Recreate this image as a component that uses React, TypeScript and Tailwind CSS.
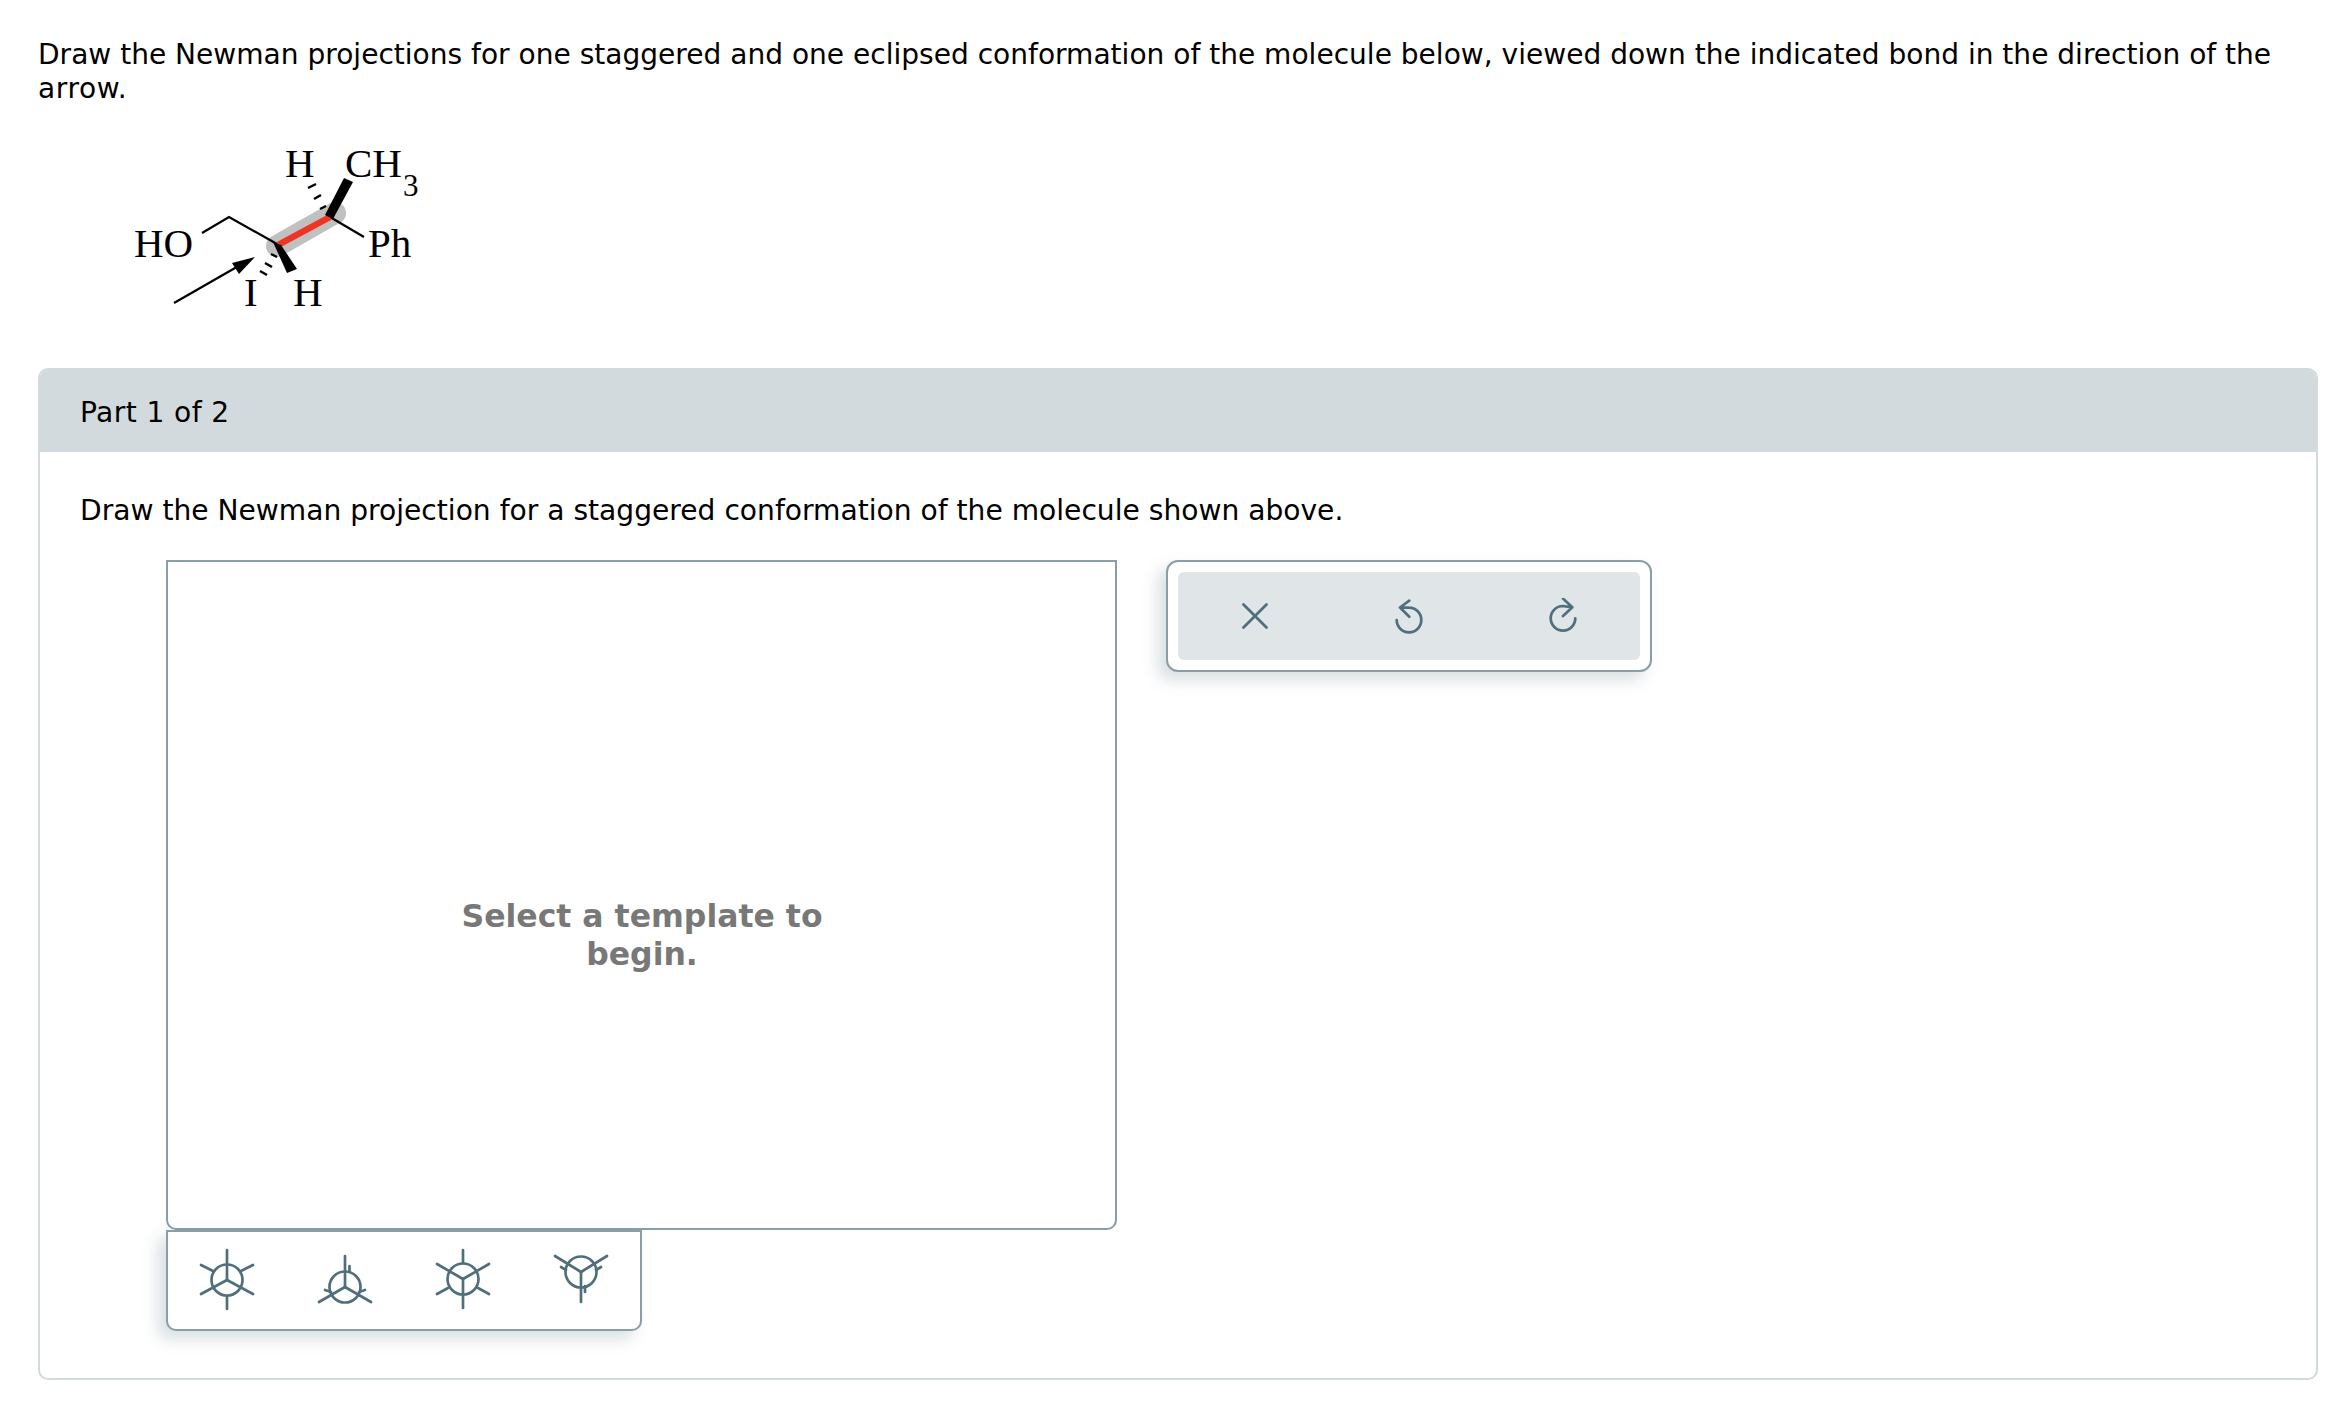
const ink = "#4f6f7c";

function Lines({ d }: { d: number[][] }) {
  return (
    <>
      {d.map((l, i) => (
        <line key={i} x1={l[0]} y1={l[1]} x2={l[2]} y2={l[3]} />
      ))}
    </>
  );
}

function Newman({ cy, lines }: { cy: number; lines: number[][] }) {
  return (
    <svg width="70" height="70" viewBox="-35 -35 70 70" fill="none" stroke={ink} strokeWidth="2.7" strokeLinecap="round" style={{ transform: `translateY(${cy}px)` }}>
      <circle cx="0" cy="0" r="15.5" />
      <Lines d={lines} />
    </svg>
  );
}

const icons = [
  { cy: -1, lines: [[0, 0, 0, -30], [0, 0, -26, 14], [0, 0, 26, 14], [-14, -9, -26, -15], [14, -9, 26, -15], [0, 16, 0, 29]] },
  { cy: 6, lines: [[0, 0, 0, -31], [0, 0, -26, 15], [0, 0, 26, 15], [4.5, -21, 4.5, -15], [-20, 3, -14, 5], [20, 3, 14, 5]] },
  { cy: -2, lines: [[0, 0, 0, 29], [0, 0, -26, -15], [0, 0, 26, -15], [0, -29, 0, -16], [-26, 15, -15, 9], [26, 15, 15, 9]] },
  { cy: -9, lines: [[0, 0, 0, 30], [0, 0, -26, -16], [0, 0, 26, -16], [-20, -5, -15, -2], [20, -5, 15, -2], [4, 14, 4, 20]] },
];

function Molecule() {
  const serif = { fontFamily: '"Liberation Serif", serif', fontSize: 41, fill: "#000" };
  return (
    <svg width="360" height="210" viewBox="0 0 360 210" className="block ml-[62px] mt-[14px] mb-[38px]">
      <line x1="177" y1="126" x2="235" y2="93" stroke="#c0c0c0" strokeWidth="22" strokeLinecap="round" />
      <g stroke="#000" strokeWidth="2.2" fill="none">
        <polyline points="102,113 129,97 177,124" />
        <line x1="230" y1="97" x2="264" y2="117" />
      </g>
      <line x1="178" y1="125" x2="230" y2="97" stroke="#ee3524" strokeWidth="6.5" />
      <polygon points="173,122 181,125 197,149 187,153" fill="#000" />
      <polygon points="225,95 233,99 253,62 244,58" fill="#000" />
      <g stroke="#000" strokeWidth="2.4">
        <line x1="171" y1="134" x2="177" y2="137" />
        <line x1="165" y1="143" x2="172" y2="147" />
        <line x1="160" y1="151" x2="167" y2="155" />
        <line x1="220" y1="89" x2="226" y2="86" />
        <line x1="214" y1="79" x2="221" y2="75" />
        <line x1="208" y1="68" x2="216" y2="64" />
      </g>
      <line x1="74" y1="183" x2="142" y2="144" stroke="#000" strokeWidth="2.2" />
      <polygon points="155,137 132,143 139,154" fill="#000" />
      <text x="34" y="137" style={serif}>HO</text>
      <text x="185" y="57" style={serif}>H</text>
      <text x="245" y="57" style={serif}>CH</text>
      <text x="303" y="76" style={{ ...serif, fontSize: 31 }}>3</text>
      <text x="268" y="137" style={serif}>Ph</text>
      <text x="144" y="186" style={serif}>I</text>
      <text x="193" y="186" style={serif}>H</text>
    </svg>
  );
}

export default function App() {
  return (
    <div className="min-h-[1410px] bg-white pt-[38px] pl-[38px] pr-[32px] text-[28.13px] leading-[35px] text-black font-['DejaVu_Sans',sans-serif]">
      <p className="leading-[34px] text-[28.06px]">Draw the Newman projections for one staggered and one eclipsed conformation of the molecule below, viewed down the indicated bond in the direction of the <span className="tracking-[0.6px]">arrow.</span></p>
      <Molecule />
      <div className="border-2 border-[#d3dadd] rounded-[10px] overflow-hidden h-[1012px]">
        <div className="h-[82px] bg-[#d3dadd] flex items-center px-[40px] pt-[2px] tracking-[0.4px]">Part 1 of 2</div>
        <div className="px-[40px] pt-[41px]">
          <p>Draw the Newman projection for a staggered conformation of the molecule shown above.</p>
          <div className="flex items-start mt-[32px] ml-[86px]">
            <div className="w-[951px]">
              <div className="h-[670px] border-2 border-[#8a9ea6] rounded-b-[10px] flex items-center justify-center pt-[80px] pl-[1px]">
                <p className="w-[400px] text-center font-bold text-[#787878] text-[31.5px] leading-[38px]">Select a template to begin.</p>
              </div>
              <div className="w-[476px] h-[101px] border-2 border-[#8a9ea6] rounded-b-[10px] bg-white grid grid-cols-4 shadow-[-8px_8px_16px_rgba(79,111,124,0.22)]">
                {icons.map((ic, i) => (
                  <div key={i} className="flex items-center justify-center">
                    <Newman cy={ic.cy} lines={ic.lines} />
                  </div>
                ))}
              </div>
            </div>
            <div className="ml-[49px] w-[486px] h-[112px] p-[10px] border-2 border-[#8a9ea6] rounded-[12px] bg-white shadow-[-8px_8px_16px_rgba(79,111,124,0.22)]">
              <div className="h-full bg-[#e0e5e7] rounded-[6px] grid grid-cols-3">
                <div className="flex items-center justify-center">
                  <svg width="28" height="28" viewBox="0 0 28 28" fill="none" stroke={ink} strokeWidth="2.8" strokeLinecap="round"><path d="M2.5 2.5 L25.5 25.5 M25.5 2.5 L2.5 25.5" /></svg>
                </div>
                <div className="flex items-center justify-center">
                  <svg width="36" height="36" viewBox="0 0 36 36" fill="none" stroke={ink} strokeWidth="2.7" strokeLinecap="round" strokeLinejoin="round"><path d="M5.7 22 A12.3 12.3 0 1 0 18 9.7 L9 9.5 M18.3 2.7 L9 9.5 L18.3 18.7" /></svg>
                </div>
                <div className="flex items-center justify-center">
                  <svg width="36" height="36" viewBox="0 0 36 36" fill="none" stroke={ink} strokeWidth="2.7" strokeLinecap="round" strokeLinejoin="round"><path d="M30.3 20.3 A12.3 12.3 0 1 1 18 8 L27.3 9.3 M18 0.6 L27.3 9.3 L18 18" /></svg>
                </div>
              </div>
            </div>
          </div>
        </div>
      </div>
    </div>
  );
}
